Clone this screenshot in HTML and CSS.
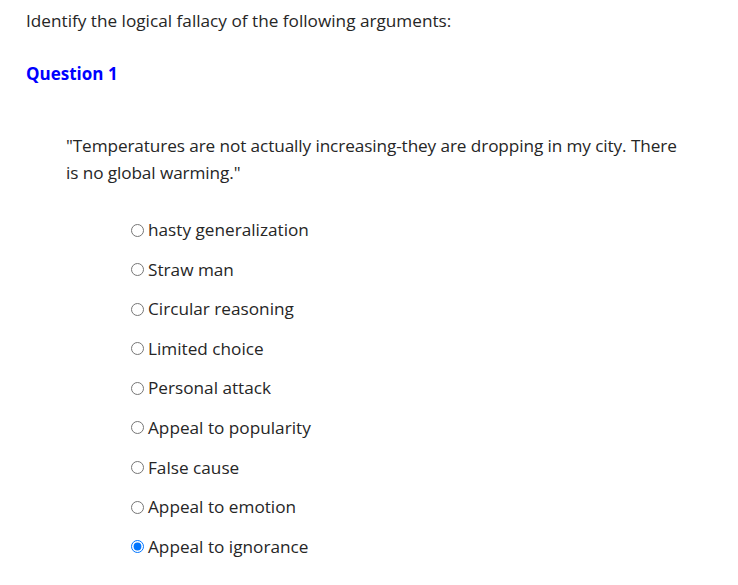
FILE: index.html
```html
<!DOCTYPE html>
<html>
<head>
<meta charset="utf-8">
<link rel="stylesheet" href="styles.css">
</head>
<body>
<div class="page">
  <p class="intro">Identify the logical fallacy of the following arguments:</p>
  <h2 class="qtitle">Question 1</h2>
  <p class="quote">"Temperatures are not actually increasing-they are dropping in my city. There is no global warming."</p>
  <ul class="options">
    <li><label><input type="radio" name="q1"><span>hasty generalization</span></label></li>
    <li><label><input type="radio" name="q1"><span>Straw man</span></label></li>
    <li><label><input type="radio" name="q1"><span>Circular reasoning</span></label></li>
    <li><label><input type="radio" name="q1"><span>Limited choice</span></label></li>
    <li><label><input type="radio" name="q1"><span>Personal attack</span></label></li>
    <li><label><input type="radio" name="q1"><span>Appeal to popularity</span></label></li>
    <li><label><input type="radio" name="q1"><span>False cause</span></label></li>
    <li><label><input type="radio" name="q1"><span>Appeal to emotion</span></label></li>
    <li><label><input type="radio" name="q1" checked><span>Appeal to ignorance</span></label></li>
  </ul>
</div>
</body>
</html>
```
FILE: styles.css
```css
html, body {
  margin: 0;
  padding: 0;
  background: #ffffff;
}
.page {
  font-family: "Open Sans", "Noto Sans", sans-serif;
  font-size: 17.2px;
  color: #262626;
  padding: 9px 26px 0 26px;
}
.intro {
  margin: 0;
  line-height: 24px;
}
.qtitle {
  margin: 29px 0 0 0;
  font-size: 17px;
  font-weight: 700;
  color: #0000ff;
  line-height: 24px;
}
.quote {
  margin: 46px 0 0 40px;
  width: 625px;
  line-height: 27px;
  letter-spacing: -0.1px;
}
.options {
  list-style: none;
  margin: 32px 0 0 104px;
  padding: 0;
  display: flex;
  flex-direction: column;
  gap: 15.6px;
}
.options li {
  line-height: 24px;
  height: 24px;
}
.options label {
  display: flex;
  align-items: center;
  gap: 4px;
}
.options input {
  margin: 0 0 0 1px;
  width: 13px;
  height: 13px;
}
```
